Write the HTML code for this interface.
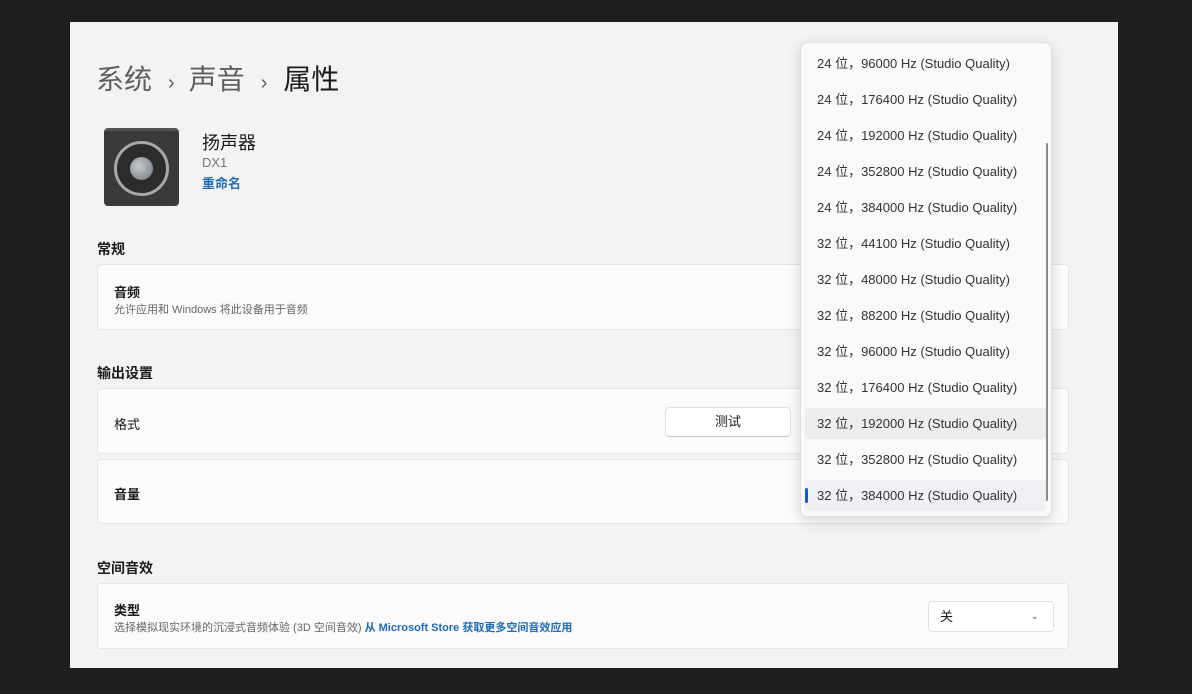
<!DOCTYPE html>
<html><head><meta charset="utf-8"><style>
*{margin:0;padding:0;box-sizing:border-box}
body{width:1192px;height:694px;background:#1f1f1f;font-family:"Liberation Sans","Noto Sans CJK SC",sans-serif;position:relative;overflow:hidden;color:#1a1a1a}
.win{position:absolute;left:70px;top:22px;width:1048px;height:646px;background:#f3f3f3}
.a{position:absolute}
.card{position:absolute;left:97px;width:972px;background:#fbfbfb;border:1px solid #e5e5e5;border-radius:4px}
.h{font-size:14px;font-weight:bold;color:#1a1a1a}
.t{font-size:13px;color:#1a1a1a}
.s{font-size:11px;color:#666}
.dd{position:absolute;left:800px;top:42px;width:252px;height:475px;background:#f9f9f9;border:1px solid #e0e0e0;border-radius:7px;box-shadow:0 4px 14px rgba(0,0,0,.15)}
.it{position:absolute;left:16px;font-size:13px;color:#333;white-space:nowrap}
</style></head><body>
<div class="win"></div>
<div class="a" style="left:96px;top:58px;font-size:28px;color:#5f5f5f;white-space:nowrap">系统<span style="font-size:20px;margin:0 14px 0 16px">›</span>声音<span style="font-size:20px;margin:0 16px 0 16px">›</span><span style="color:#1a1a1a">属性</span></div>
<div class="a" style="left:104px;top:128px;width:75px;height:78px;background:#3a3a3a;border-radius:4px;border-top:3px solid #555"></div>
<div class="a" style="left:114px;top:141px;width:55px;height:55px;border-radius:50%;border:3px solid #a8a8a8;background:#2c2c2c"></div>
<div class="a" style="left:130px;top:157px;width:23px;height:23px;border-radius:50%;background:radial-gradient(circle at 40% 40%,#c8ccd2,#6c7078)"></div>
<div class="a" style="left:202px;top:129px;font-size:18px">扬声器</div>
<div class="a" style="left:202px;top:155px;font-size:13px;color:#777">DX1</div>
<div class="a" style="left:202px;top:173px;font-size:13px;color:#1e6bb8;font-weight:bold">重命名</div>
<div class="a h" style="left:97px;top:239px">常规</div>
<div class="card" style="top:264px;height:66px"><div class="a t" style="left:16px;top:17px;font-weight:bold">音频</div><div class="a s" style="left:16px;top:36px">允许应用和 Windows 将此设备用于音频</div></div>
<div class="a h" style="left:97px;top:363px">输出设置</div>
<div class="card" style="top:388px;height:66px"><div class="a t" style="left:16px;top:25px">格式</div>
<div class="a" style="left:567px;top:18px;width:126px;height:30px;background:#fff;border:1px solid #e0e0e0;border-bottom-color:#ccc;border-radius:4px;font-size:13px;text-align:center;line-height:28px">测试</div></div>
<div class="card" style="top:459px;height:65px"><div class="a t" style="left:16px;top:24px;font-weight:bold">音量</div></div>
<div class="a h" style="left:97px;top:558px">空间音效</div>
<div class="card" style="top:583px;height:66px"><div class="a t" style="left:16px;top:16px;font-weight:bold">类型</div><div class="a s" style="left:16px;top:35px;white-space:nowrap">选择模拟现实环境的沉浸式音频体验 (3D 空间音效) <span style="color:#1e6bb8;font-weight:bold">从 Microsoft Store 获取更多空间音效应用</span></div>
<div class="a" style="left:830px;top:17px;width:126px;height:31px;background:#fff;border:1px solid #e0e0e0;border-radius:4px;font-size:13px;line-height:29px;padding-left:11px">关<span style="position:absolute;right:14px;top:0;font-size:10px;color:#666">&#8964;</span></div></div>
<div class="a" style="left:1046px;top:170px;font-size:12px;color:#333">3</div>
<div class="dd">
<div class="a" style="left:4px;top:365px;width:241px;height:31px;background:#ededed;border-radius:4px"></div>
<div class="a" style="left:4px;top:437px;width:241px;height:31px;background:#eef0f3;border-radius:4px"></div>
<div class="a" style="left:4px;top:445px;width:3px;height:15px;background:#0f5fc2;border-radius:2px"></div>
<div class="a" style="left:245px;top:100px;width:2px;height:358px;background:#8a8a8a;border-radius:1px"></div>
<div class="it" style="top:10px">24 位，96000 Hz (Studio Quality)</div>
<div class="it" style="top:46px">24 位，176400 Hz (Studio Quality)</div>
<div class="it" style="top:82px">24 位，192000 Hz (Studio Quality)</div>
<div class="it" style="top:118px">24 位，352800 Hz (Studio Quality)</div>
<div class="it" style="top:154px">24 位，384000 Hz (Studio Quality)</div>
<div class="it" style="top:190px">32 位，44100 Hz (Studio Quality)</div>
<div class="it" style="top:226px">32 位，48000 Hz (Studio Quality)</div>
<div class="it" style="top:262px">32 位，88200 Hz (Studio Quality)</div>
<div class="it" style="top:298px">32 位，96000 Hz (Studio Quality)</div>
<div class="it" style="top:334px">32 位，176400 Hz (Studio Quality)</div>
<div class="it" style="top:370px">32 位，192000 Hz (Studio Quality)</div>
<div class="it" style="top:406px">32 位，352800 Hz (Studio Quality)</div>
<div class="it" style="top:442px">32 位，384000 Hz (Studio Quality)</div>
</div>
</body></html>
